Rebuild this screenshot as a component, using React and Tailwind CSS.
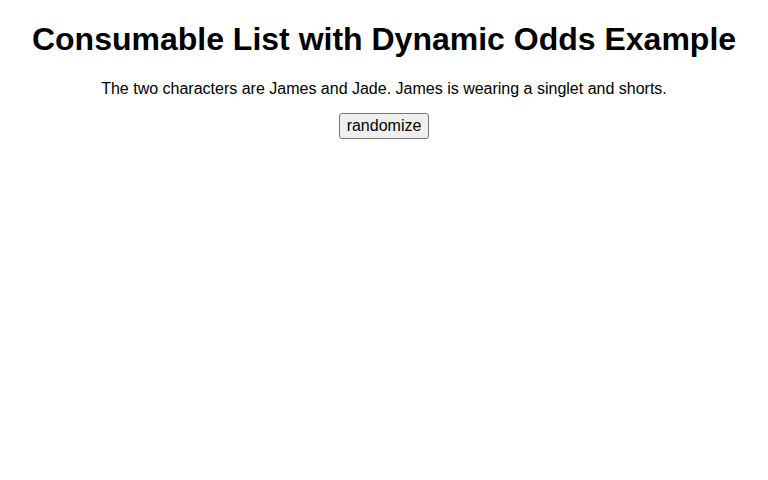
import React, { useState } from "react";

const outfits = ["a singlet and shorts", "a hoodie and jeans", "a suit and tie", "a t-shirt and skirt"];

const App = () => {
  const [outfit, setOutfit] = useState(outfits[0]);

  const randomize = () => {
    setOutfit(outfits[Math.floor(Math.random() * outfits.length)]);
  };

  return (
    <div className="min-h-screen bg-white text-black text-center font-['Liberation_Sans',Arial,sans-serif] px-2">
      <h1 className="text-[32px] font-bold leading-[37px] pt-[21px] mb-[22px]">
        Consumable List with Dynamic Odds Example
      </h1>
      <p className="text-base leading-[18px] mb-[15px]">
        The two characters are James and Jade. James is wearing {outfit}.
      </p>
      <button
        onClick={randomize}
        className="text-base leading-[18px] px-[7px] py-[3px] bg-[#efefef] border border-[#767676] rounded-[3px] hover:bg-[#e5e5e5]"
      >
        randomize
      </button>
    </div>
  );
};

export default App;
